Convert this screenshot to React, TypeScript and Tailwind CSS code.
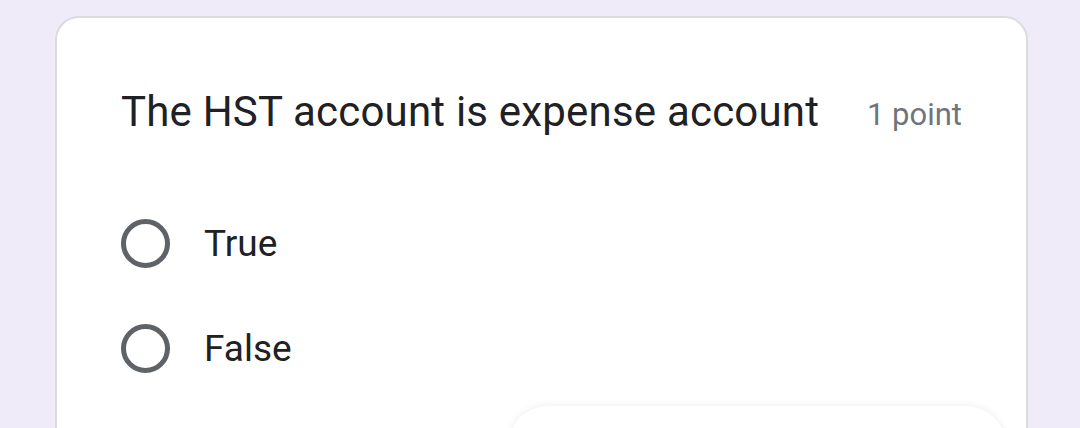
import React from 'react';

const OPTIONS = ['True', 'False'];

function Radio() {
  return <div className="w-[49px] h-[49px] rounded-full border-[5px] border-[#5f6368] shrink-0" />;
}

export default function App() {
  return (
    <div className="relative w-[1080px] h-[428px] overflow-hidden bg-[#f0ebf8] font-['Roboto',sans-serif]">
      <div className="ml-[55px] mt-[16px] w-[973px] h-[460px] bg-white border-2 border-[#dadce0] rounded-[24px] pl-[64px] pr-[64px] pt-[68px]">
        {/* question header */}
        <div className="flex items-start justify-between">
          <h2 className="text-[42px] leading-[52px] tracking-[0.2px] text-[#202124]">
            The HST account is expense account
          </h2>
          <span className="text-[31px] leading-[52px] text-[#70757a] mt-[3px]">1 point</span>
        </div>
        {/* options */}
        <div className="mt-[78px] flex flex-col gap-[56px]">
          {OPTIONS.map((opt) => (
            <label key={opt} className="flex items-center gap-[34px]">
              <Radio />
              <span className="text-[37px] leading-[49px] text-[#202124]">{opt}</span>
            </label>
          ))}
        </div>
      </div>
      {/* floating element at bottom */}
      <div className="absolute left-[508px] top-[406px] w-[498px] h-[80px] bg-white rounded-[40px] shadow-[0_0_8px_rgba(0,0,0,0.08)]" />
    </div>
  );
}
